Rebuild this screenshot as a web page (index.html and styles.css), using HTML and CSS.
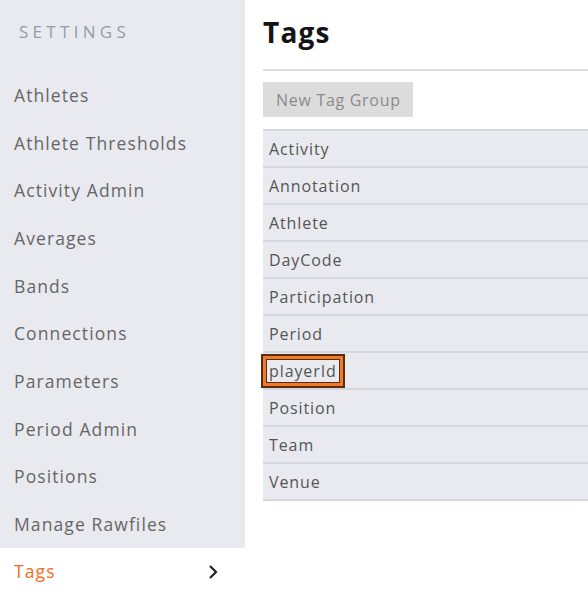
FILE: index.html
```html
<!DOCTYPE html>
<html>
<head>
<meta charset="utf-8">
<link rel="stylesheet" href="styles.css">
</head>
<body>
<div class="app">
  <nav class="sidebar">
    <div class="side-title">SETTINGS</div>
    <ul class="menu">
      <li class="item">Athletes</li>
      <li class="item">Athlete Thresholds</li>
      <li class="item">Activity Admin</li>
      <li class="item">Averages</li>
      <li class="item">Bands</li>
      <li class="item">Connections</li>
      <li class="item">Parameters</li>
      <li class="item">Period Admin</li>
      <li class="item">Positions</li>
      <li class="item">Manage Rawfiles</li>
      <li class="item active"><span>Tags</span>
        <svg class="chev" width="10" height="16" viewBox="0 0 10 16"><path d="M2 2 L8 8 L2 14" fill="none" stroke="#222" stroke-width="2.2"/></svg>
      </li>
    </ul>
  </nav>
  <main class="content">
    <h1 class="title">Tags</h1>
    <div class="rule"></div>
    <button class="btn">New Tag Group</button>
    <div class="table">
      <div class="row">Activity</div>
      <div class="row">Annotation</div>
      <div class="row">Athlete</div>
      <div class="row">DayCode</div>
      <div class="row">Participation</div>
      <div class="row">Period</div>
      <div class="row"><span class="focus">playerId</span></div>
      <div class="row">Position</div>
      <div class="row">Team</div>
      <div class="row">Venue</div>
    </div>
  </main>
</div>
</body>
</html>
```
FILE: styles.css
```css
* { box-sizing: border-box; }
html, body { margin: 0; padding: 0; background: #fff; }
body { font-family: "Open Sans", Lato, sans-serif; width: 588px; height: 594px; overflow: hidden; }
.app { display: flex; height: 594px; }
.sidebar { width: 245px; flex: none; background: #e9eaef; display: flex; flex-direction: column; }
.side-title { padding: 20px 0 0 19px; height: 71px; font-size: 17px; letter-spacing: 4.3px; color: #9a9ba0; }
.menu { list-style: none; margin: 0; padding: 0; display: flex; flex-direction: column; flex: 1; }
.item { height: 47.7px; flex: none; display: flex; align-items: center; padding-left: 14px; font-size: 17.5px; letter-spacing: 1.1px; color: #666; }
.item.active { background: #fff; color: #f26b21; justify-content: space-between; padding-right: 27px; flex: 1; align-items: flex-start; padding-top: 11px; }
.chev { margin-top: 5px; }
.content { flex: 1; padding-left: 18px; }
.title { margin: 0; padding-top: 13px; height: 69px; font-size: 28px; font-weight: 700; letter-spacing: 1.2px; color: #141414; }
.rule { height: 2px; background: #dcdde2; }
.btn { display: block; margin-top: 11px; height: 35px; padding: 0 12px 0 13px; border: 0; background: #dcdcdc; color: #8a8a8a; font-family: inherit; font-size: 16px; letter-spacing: 0.7px; }
.table { margin-top: 12px; border-top: 2px solid #d7d8dd; }
.row { height: 37px; background: #e9eaef; border-bottom: 2px solid #d7d8dd; display: flex; align-items: center; padding-left: 6px; font-size: 16px; letter-spacing: 0.9px; color: #555; }
.focus { box-shadow: 0 0 0 1px #5a2e0c, 0 0 0 4px #f07a2a, 0 0 0 6px #5a2e0c; padding: 0 2px; margin-left: -2px; line-height: 22px; }
```
